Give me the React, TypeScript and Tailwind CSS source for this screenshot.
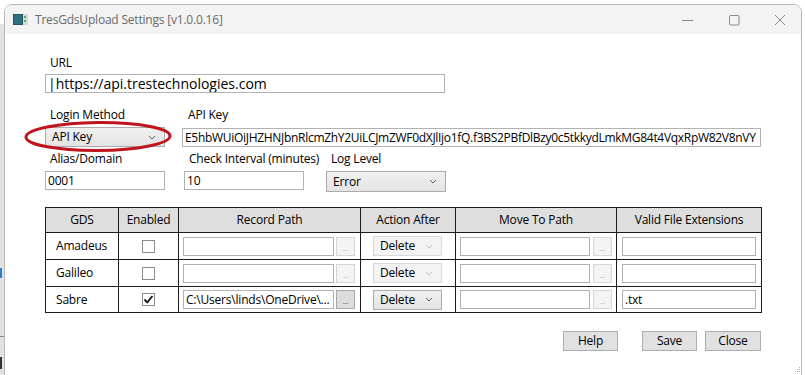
import React from 'react';

const font = "font-['Segoe_UI','Open_Sans',sans-serif]";

function Chevron({ light }: { light?: boolean }) {
  return (
    <svg width="8" height="5" viewBox="0 0 8 5" className="shrink-0">
      <path d="M1 1 L4 4 L7 1" fill="none" stroke={light ? '#c4c4c4' : '#606060'} strokeWidth="1" />
    </svg>
  );
}

function Combo({ text, w, h = 20, disabled }: { text: string; w: string; h?: number; disabled?: boolean }) {
  return (
    <div
      className={`${w} flex items-center justify-between pl-[6px] pr-[8px] border text-[12px] text-black ${
        disabled ? 'bg-[#f3f3f3] border-[#dadada]' : 'bg-gradient-to-b from-[#f0f0f0] to-[#e4e4e4] border-[#acacac]'
      }`}
      style={{ height: h }}
    >
      <span>{text}</span>
      <Chevron light={disabled} />
    </div>
  );
}

function Field({ text, w, big, tight }: { text?: string; w: string; big?: boolean; tight?: boolean }) {
  return (
    <div
      className={`${w} h-[19px] border border-[#b2b2b2] bg-white pl-[2px] overflow-hidden whitespace-nowrap flex items-center text-black ${
        big ? 'text-[14px] tracking-[0px]' : 'text-[12px]'
      } ${tight ? 'tracking-[-0.3px]' : ''}`}
    >
      {text}
    </div>
  );
}

function Dots({ enabled }: { enabled?: boolean }) {
  return (
    <div
      className={`w-[19px] h-[19px] border flex items-end justify-center pb-[3px] text-[8px] leading-none ${
        enabled ? 'bg-[#dcdcdc] border-[#a9a9a9] text-[#555]' : 'bg-[#f4f4f4] border-[#d6d6d6] text-[#b0b0b0]'
      }`}
    >
      ...
    </div>
  );
}

function Check({ checked }: { checked?: boolean }) {
  return (
    <div className="w-[13px] h-[13px] border border-[#8c8c8c] bg-white mx-auto flex items-center justify-center">
      {checked && (
        <svg width="11" height="11" viewBox="0 0 11 11">
          <path d="M1.5 5.5 L4.3 8.3 L9.5 2" fill="none" stroke="#111" strokeWidth="1.8" />
        </svg>
      )}
    </div>
  );
}

const rows = [
  { gds: 'Amadeus', enabled: false, record: '', ext: '' },
  { gds: 'Galileo', enabled: false, record: '', ext: '' },
  { gds: 'Sabre', enabled: true, record: 'C:\\Users\\linds\\OneDrive\\...', ext: '.txt' },
];

export default function App() {
  return (
    <div className={`w-[805px] h-[375px] overflow-hidden bg-white flex ${font} tracking-[-0.2px]`}>
      {/* desktop strip behind the window */}
      <div className="w-[4px] mt-[24px] h-[400px] bg-[#e2e2e2] flex flex-col">
        <div className="mt-[244px] h-[10px] w-[2px] bg-[#2b7fd0]" />
        <div className="mt-[58px] h-[1px] w-[4px] bg-[#8a8a8a]" />
        <div className="mt-[20px] h-[12px] w-[2px] bg-[#333]" />
      </div>

      {/* window */}
      <div className="mt-[4px] w-[798px] h-[420px] border border-[#b8b8b8] rounded-t-[8px] bg-white overflow-hidden relative">
        {/* title bar */}
        <div className="h-[29px] bg-[#f3f3f3] flex items-center">
          <svg width="15" height="11" viewBox="0 0 15 11" className="ml-[8px]">
            <rect x="0" y="0" width="10" height="11" fill="#24566a" />
            <rect x="1" y="1" width="8" height="9" fill="#2f6f7e" />
            <rect x="10" y="0" width="5" height="11" fill="#d9d9d9" />
            <rect x="11" y="2" width="2" height="2" fill="#4caf50" />
            <rect x="11" y="6" width="2" height="2" fill="#4caf50" />
          </svg>
          <span className="ml-[7px] text-[12px] text-[#6a6a6a]">TresGdsUpload Settings [v1.0.0.16]</span>
          <div className="ml-auto flex items-center">
            <svg width="12" height="12" viewBox="0 0 12 12" className="mr-[34px]">
              <path d="M0 6.5 H11" stroke="#8a8a8a" strokeWidth="1" />
            </svg>
            <svg width="12" height="12" viewBox="0 0 12 12" className="mr-[34px]">
              <rect x="1.5" y="1.5" width="9.5" height="9.5" rx="1" fill="none" stroke="#8a8a8a" strokeWidth="1" />
            </svg>
            <svg width="12" height="12" viewBox="0 0 12 12" className="mr-[15px]">
              <path d="M1 1 L11 11 M11 1 L1 11" stroke="#8a8a8a" strokeWidth="1" />
            </svg>
          </div>
        </div>

        {/* body */}
        <div className="pl-[40px] pt-[21px] text-[12px] text-black">
          <div className="pl-[5px] h-[16px] leading-[16px]">URL</div>
          <div className="mt-[3px]">
            <Field w="w-[400px]" big text="|https://api.trestechnologies.com" />
          </div>

          {/* login / api key */}
          <div className="mt-[14px] flex">
            <div className="w-[137px] relative">
              <div className="pl-[5px] h-[16px] leading-[16px]">Login Method</div>
              <div className="mt-[4px]">
                <Combo text="API Key" w="w-[120px]" />
              </div>
              <svg width="150" height="33" viewBox="0 0 150 33" className="absolute left-[-21px] top-[13px] pointer-events-none">
                <ellipse cx="74" cy="16.5" rx="72" ry="14" fill="none" stroke="#c0141c" strokeWidth="3" transform="rotate(-0.5 74 16.5)" />
              </svg>
            </div>
            <div>
              <div className="pl-[6px] h-[16px] leading-[16px]">API Key</div>
              <div className="mt-[5px]">
                <Field
                  w="w-[579px]"
                  tight
                  text="E5hbWUiOiJHZHNJbnRlcmZhY2UiLCJmZWF0dXJlIjo1fQ.f3BS2PBfDlBzy0c5tkkydLmkMG84t4VqxRpW82V8nVY"
                />
              </div>
            </div>
          </div>

          {/* alias / interval / log level */}
          <div className="mt-[4px] flex">
            <div className="w-[139px]">
              <div className="pl-[5px] h-[16px] leading-[16px]">Alias/Domain</div>
              <div className="mt-[4px]">
                <Field w="w-[120px]" text="0001" />
              </div>
            </div>
            <div className="w-[142px]">
              <div className="pl-[5px] h-[16px] leading-[16px]">Check Interval (minutes)</div>
              <div className="mt-[4px]">
                <Field w="w-[120px]" text="10" />
              </div>
            </div>
            <div>
              <div className="pl-[5px] h-[16px] leading-[16px]">Log Level</div>
              <div className="mt-[4px]">
                <Combo text="Error" w="w-[120px]" h={21} />
              </div>
            </div>
          </div>

          {/* gds table */}
          <table className="mt-[15px] w-[716px] table-fixed border-collapse text-[12px]">
            <colgroup>
              <col className="w-[73px]" />
              <col className="w-[60px]" />
              <col className="w-[182px]" />
              <col className="w-[95px]" />
              <col className="w-[161px]" />
              <col className="w-[145px]" />
            </colgroup>
            <thead>
              <tr className="h-[25px] bg-[#dedede]">
                {['GDS', 'Enabled', 'Record Path', 'Action After', 'Move To Path', 'Valid File Extensions'].map((h) => (
                  <th key={h} className="border border-[#1c1c1c] font-normal text-center p-0">
                    {h}
                  </th>
                ))}
              </tr>
            </thead>
            <tbody>
              {rows.map((r, i) => (
                <tr key={r.gds} className={i === 2 ? 'h-[26px]' : 'h-[27px]'}>
                  <td className="border border-[#1c1c1c] pl-[10px] p-0">{r.gds}</td>
                  <td className="border border-[#1c1c1c] p-0">
                    <Check checked={r.enabled} />
                  </td>
                  <td className="border border-[#1c1c1c] p-0">
                    <div className="flex items-center gap-[2px] pl-[4px]">
                      <Field w="w-[151px]" text={r.record} />
                      <Dots enabled={r.enabled} />
                    </div>
                  </td>
                  <td className="border border-[#1c1c1c] p-0">
                    <div className="pl-[12px]">
                      <Combo text="Delete" w="w-[69px]" disabled={!r.enabled} />
                    </div>
                  </td>
                  <td className="border border-[#1c1c1c] p-0">
                    <div className="flex items-center gap-[3px] pl-[4px]">
                      <Field w="w-[130px]" />
                      <Dots />
                    </div>
                  </td>
                  <td className="border border-[#1c1c1c] p-0">
                    <div className="pl-[5px]">
                      <Field w="w-[134px]" text={r.ext} />
                    </div>
                  </td>
                </tr>
              ))}
            </tbody>
          </table>

          {/* buttons */}
          <div className="mt-[18px] w-[716px] flex justify-end">
            <button className="w-[55px] h-[20px] bg-[#e1e1e1] border border-[#adadad] text-[12px]">Help</button>
            <button className="ml-[24px] w-[55px] h-[20px] bg-[#e1e1e1] border border-[#adadad] text-[12px]">Save</button>
            <button className="ml-[8px] w-[56px] h-[20px] bg-[#e1e1e1] border border-[#adadad] text-[12px]">Close</button>
          </div>
        </div>

        {/* resize grip */}
        <svg width="8" height="8" viewBox="0 0 8 8" className="absolute left-[788px] top-[362px]">
          <rect x="6" y="0" width="1" height="1" fill="#b0b0b0" />
          <rect x="4" y="2" width="1" height="1" fill="#b0b0b0" />
          <rect x="6" y="2" width="1" height="1" fill="#b0b0b0" />
          <rect x="2" y="4" width="1" height="1" fill="#b0b0b0" />
          <rect x="4" y="4" width="1" height="1" fill="#b0b0b0" />
          <rect x="6" y="4" width="1" height="1" fill="#b0b0b0" />
        </svg>
      </div>
    </div>
  );
}
